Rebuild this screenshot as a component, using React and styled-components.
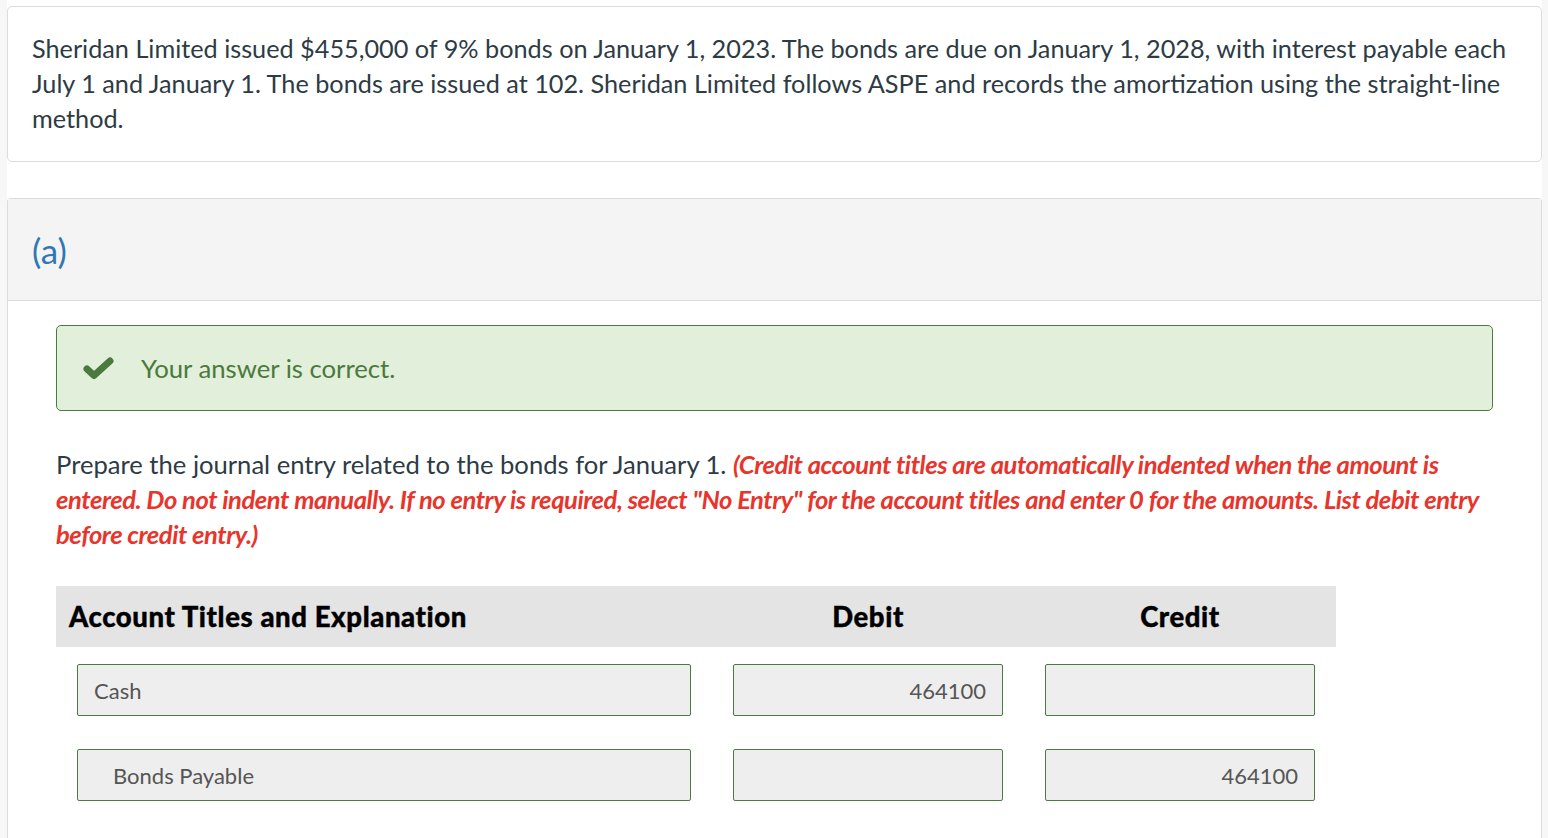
import React from "react";
import styled, { createGlobalStyle } from "styled-components";

const Global = createGlobalStyle`
  html, body { margin: 0; padding: 0; background: #f7f7f7; }
  body { font-family: Lato, "Open Sans", sans-serif; color: #2d3b45; }
  * { box-sizing: border-box; }
`;

const Page = styled.div`
  margin: 0 6px 0 7px;
  background: #fff;
  padding-top: 6px;
  min-height: 838px;
`;

const Card = styled.div`
  border: 1px solid #dcdcdc;
  border-radius: 5px;
  padding: 24px 24px 25px 24px;
  font-size: 25.25px;
  line-height: 35px;
  color: #2d3b45;
`;

const Part = styled.section`
  margin-top: 36px;
  border: 1px solid #dcdcdc;
  border-bottom: none;
  border-radius: 4px 4px 0 0;
`;

const PartHeader = styled.div`
  background: #f4f4f4;
  height: 102px;
  display: flex;
  align-items: center;
  padding-left: 24px;
  border-bottom: 1px solid #dcdcdc;
  font-size: 35px;
  color: #2f78b4;
`;

const PartBody = styled.div`
  padding: 24px 48px 80px 48px;
`;

const Alert = styled.div`
  height: 86px;
  background: #e2efda;
  border: 1px solid #4a7c3f;
  border-radius: 5px;
  display: flex;
  align-items: center;
  padding-left: 26px;
  gap: 26px;
  font-size: 25.7px;
  color: #4a7a3c;
`;

const Instructions = styled.p`
  margin: 36px 0 0 0;
  font-size: 25.6px;
  line-height: 35px;
  color: #2d3b45;
`;

const Red = styled.em`
  font-weight: 700;
  font-style: italic;
  color: #e8352c;
  letter-spacing: -0.45px;
`;

const Table = styled.div`
  margin-top: 34px;
  width: 1280px;
  display: grid;
  grid-template-columns: 656px 312px 312px;
`;

const HeadCell = styled.div`
  background: #e4e4e4;
  height: 61px;
  display: flex;
  align-items: center;
  justify-content: ${(p) => (p.$center ? "center" : "flex-start")};
  padding-left: ${(p) => (p.$center ? "0" : "13px")};
  font-weight: 900;
  font-size: 27.5px;
  letter-spacing: 0.6px;
  -webkit-text-stroke: 0.4px #000;
  color: #000;
`;

const Cell = styled.div`
  padding: ${(p) => (p.$first ? "17px 21px 0 21px" : "33px 21px 0 21px")};
`;

const Field = styled.div`
  height: 52px;
  background: #eeeeee;
  border: 1px solid #4a7c3f;
  border-radius: 2px;
  display: flex;
  align-items: center;
  justify-content: ${(p) => (p.$num ? "flex-end" : "flex-start")};
  padding: 0 16px 0 ${(p) => (p.$indent ? "35px" : "16px")};
  font-size: 22px;
  color: #555;
`;

const Check = () => (
  <svg width="32" height="24" viewBox="0 0 32 24">
    <polyline
      points="4,13 11,19.5 27,5"
      fill="none"
      stroke="#4a7a3c"
      strokeWidth="7"
      strokeLinecap="round"
      strokeLinejoin="round"
    />
  </svg>
);

const rows = [
  { title: "Cash", debit: "464100", credit: "", indent: false },
  { title: "Bonds Payable", debit: "", credit: "464100", indent: true },
];

export default function App() {
  return (
    <>
      <Global />
      <Page>
        <Card>
          Sheridan Limited issued $455,000 of 9% bonds on January 1, 2023. The bonds are due on January 1, 2028, with interest payable each July 1 and January 1. The bonds are issued at 102. Sheridan Limited follows ASPE and records the amortization using the straight-line method.
        </Card>
        <Part>
          <PartHeader>(a)</PartHeader>
          <PartBody>
            <Alert>
              <Check />
              <span>Your answer is correct.</span>
            </Alert>
            <Instructions>
              Prepare the journal entry related to the bonds for January 1.{" "}
              <Red>
                (Credit account titles are automatically indented when the amount is entered. Do not indent manually. If no entry is required, select "No Entry" for the account titles and enter 0 for the amounts. List debit entry before credit entry.)
              </Red>
            </Instructions>
            <Table>
              <HeadCell>Account Titles and Explanation</HeadCell>
              <HeadCell $center>Debit</HeadCell>
              <HeadCell $center>Credit</HeadCell>
              {rows.map((r, i) => (
                <React.Fragment key={r.title}>
                  <Cell $first={i === 0}>
                    <Field $indent={r.indent}>{r.title}</Field>
                  </Cell>
                  <Cell $first={i === 0}>
                    <Field $num>{r.debit}</Field>
                  </Cell>
                  <Cell $first={i === 0}>
                    <Field $num>{r.credit}</Field>
                  </Cell>
                </React.Fragment>
              ))}
            </Table>
          </PartBody>
        </Part>
      </Page>
    </>
  );
}
